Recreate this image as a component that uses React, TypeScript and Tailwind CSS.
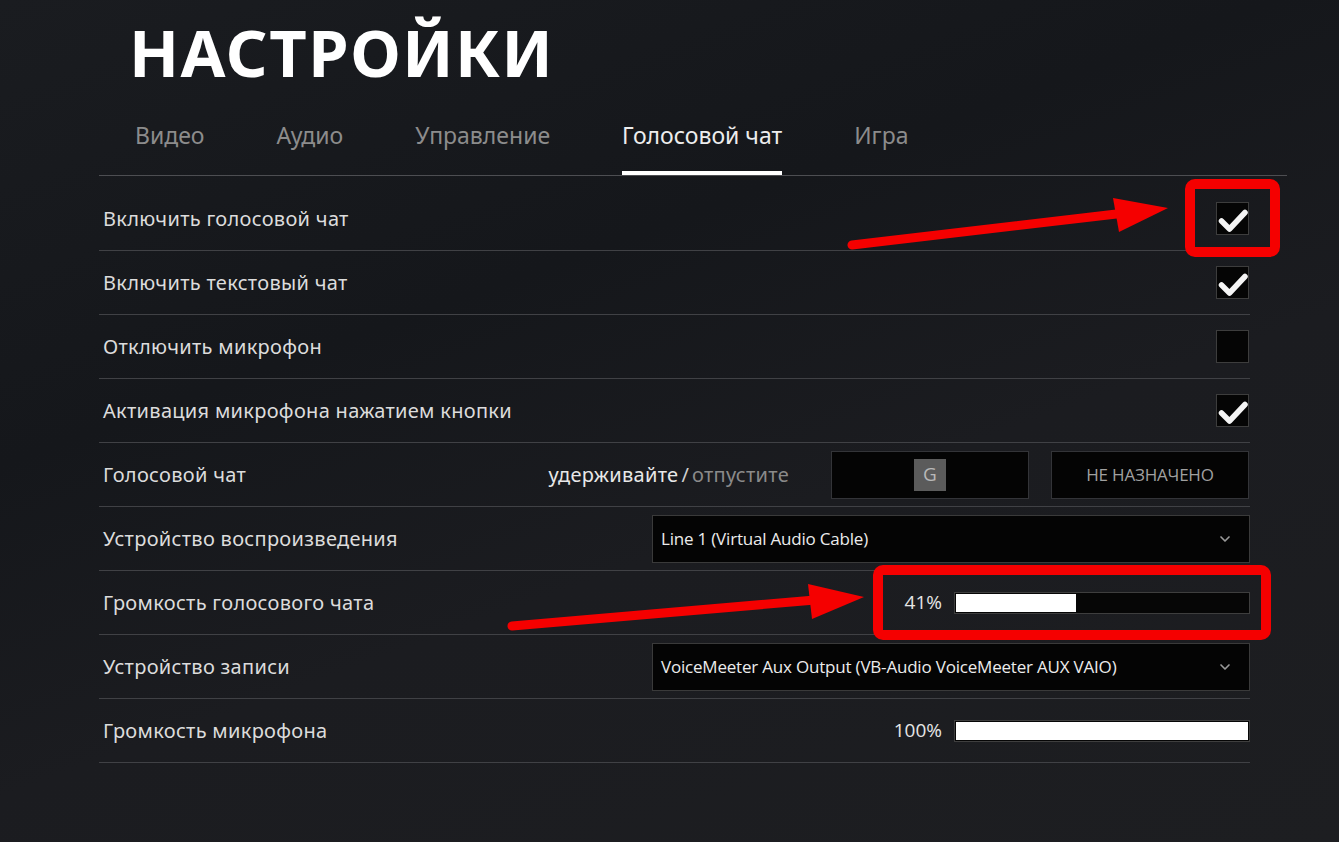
import { ChevronDown } from 'lucide-react';

const tabs = ['Видео', 'Аудио', 'Управление', 'Голосовой чат', 'Игра'];

function Checkbox({ checked }: { checked: boolean }) {
  return (
    <div className="w-[33px] h-[33px] bg-[#050505] border border-[#3d3d3d] flex items-center justify-center mr-px">
      {checked && (
        <svg width="30" height="30" viewBox="0 0 30 30">
          <path d="M3.5 17 L11.5 25 L27 8.5" fill="none" stroke="#f5f5f5" strokeWidth="5.5" strokeLinecap="round" strokeLinejoin="round" />
        </svg>
      )}
    </div>
  );
}

function Select({ value }: { value: string }) {
  return (
    <div className="w-[598px] h-[48px] bg-[#040404] border border-[#3a3a3a] flex items-center justify-between pl-[8px] pr-[16px]">
      <span className="text-[17px] text-[#ececec] font-['Open_Sans',sans-serif] tracking-[-0.2px]">{value}</span>
      <ChevronDown size={16} strokeWidth={2.5} className="text-[#9a9a9a]" />
    </div>
  );
}

function Slider({ value }: { value: number }) {
  return (
    <div className="flex items-center gap-[12px]">
      <span className="text-[19px] text-[#e6e6e6] font-['Open_Sans',sans-serif]">{value}%</span>
      <div className="w-[296px] h-[22px] bg-[#060606] border border-[#3e3e3e] p-px">
        <div className="h-full bg-white" style={{ width: `${value}%` }} />
      </div>
    </div>
  );
}

function Row({ label, children }: { label: string; children?: React.ReactNode }) {
  return (
    <div className="h-16 border-b border-[#404145] flex items-center justify-between pl-[4px]">
      <span className="text-[20px] tracking-[0.3px] text-[#dcdcdc]">{label}</span>
      {children}
    </div>
  );
}

export default function App() {
  return (
    <div className="relative w-[1339px] h-[842px] overflow-hidden bg-[linear-gradient(160deg,#1a1c20_0%,#15171b_35%,#1b1c20_60%,#1d1e21_100%)] font-['Noto_Sans',sans-serif]">
      <div className="pl-[99px] pt-[20px]">
        {/* Header */}
        <h1 className="pl-[30px] text-[65px] leading-none font-bold text-white tracking-[1.5px]">НАСТРОЙКИ</h1>

        {/* Tabs */}
        <div className="mt-[36px] w-[1188px] flex gap-[72px] pl-[36px] border-b border-[#4d4e52]">
          {tabs.map((tab) => (
            <div
              key={tab}
              className={`pb-[21px] border-b-4 text-[23px] leading-[29px] ${
                tab === 'Голосовой чат' ? 'border-white text-[#ededed]' : 'border-transparent text-[#8c8c8c]'
              }`}
            >
              {tab}
            </div>
          ))}
        </div>

        {/* Settings list */}
        <div className="mt-[11px] w-[1151px]">
          <Row label="Включить голосовой чат">
            <Checkbox checked />
          </Row>
          <Row label="Включить текстовый чат">
            <Checkbox checked />
          </Row>
          <Row label="Отключить микрофон">
            <Checkbox checked={false} />
          </Row>
          <Row label="Активация микрофона нажатием кнопки">
            <Checkbox checked />
          </Row>
          <Row label="Голосовой чат">
            <div className="flex items-center">
              <span className="text-[20px] tracking-[0.3px] text-[#e8e8e8]">удерживайте</span>
              <span className="text-[20px] text-[#cfcfcf] mx-[3px]">/</span>
              <span className="text-[20px] tracking-[0.3px] text-[#8a8a8a]">отпустите</span>
              <div className="ml-[42px] w-[198px] h-[48px] bg-[#040404] border border-[#333438] flex items-center justify-center">
                <div className="w-[32px] h-[32px] bg-[#5b5b5b] flex items-center justify-center text-[19px] text-[#b8b8b8] font-['Open_Sans',sans-serif]">
                  G
                </div>
              </div>
              <div className="ml-[22px] mr-px w-[198px] h-[48px] bg-[#040404] border border-[#333438] flex items-center justify-center text-[17px] text-[#a0a0a0] font-['Open_Sans',sans-serif] tracking-[-0.2px]">
                НЕ НАЗНАЧЕНО
              </div>
            </div>
          </Row>
          <Row label="Устройство воспроизведения">
            <Select value="Line 1 (Virtual Audio Cable)" />
          </Row>
          <Row label="Громкость голосового чата">
            <Slider value={41} />
          </Row>
          <Row label="Устройство записи">
            <Select value="VoiceMeeter Aux Output (VB-Audio VoiceMeeter AUX VAIO)" />
          </Row>
          <Row label="Громкость микрофона">
            <Slider value={100} />
          </Row>
        </div>
      </div>

      {/* Red callouts drawn over the list */}
      <svg className="absolute inset-0 pointer-events-none" width="1339" height="842" viewBox="0 0 1339 842">
        <rect x="1190" y="184" width="85" height="68" rx="5" fill="none" stroke="#f50000" strokeWidth="10" />
        <line x1="852" y1="245" x2="1125" y2="213" stroke="#f50000" strokeWidth="9" strokeLinecap="round" />
        <polygon points="1113,198 1168,208 1119,232" fill="#f50000" />
        <rect x="878" y="570" width="388" height="65" rx="5" fill="none" stroke="#f50000" strokeWidth="10" />
        <line x1="512" y1="626" x2="815" y2="600" stroke="#f50000" strokeWidth="9" strokeLinecap="round" />
        <polygon points="808,584 864,597 812,619" fill="#f50000" />
      </svg>
    </div>
  );
}
